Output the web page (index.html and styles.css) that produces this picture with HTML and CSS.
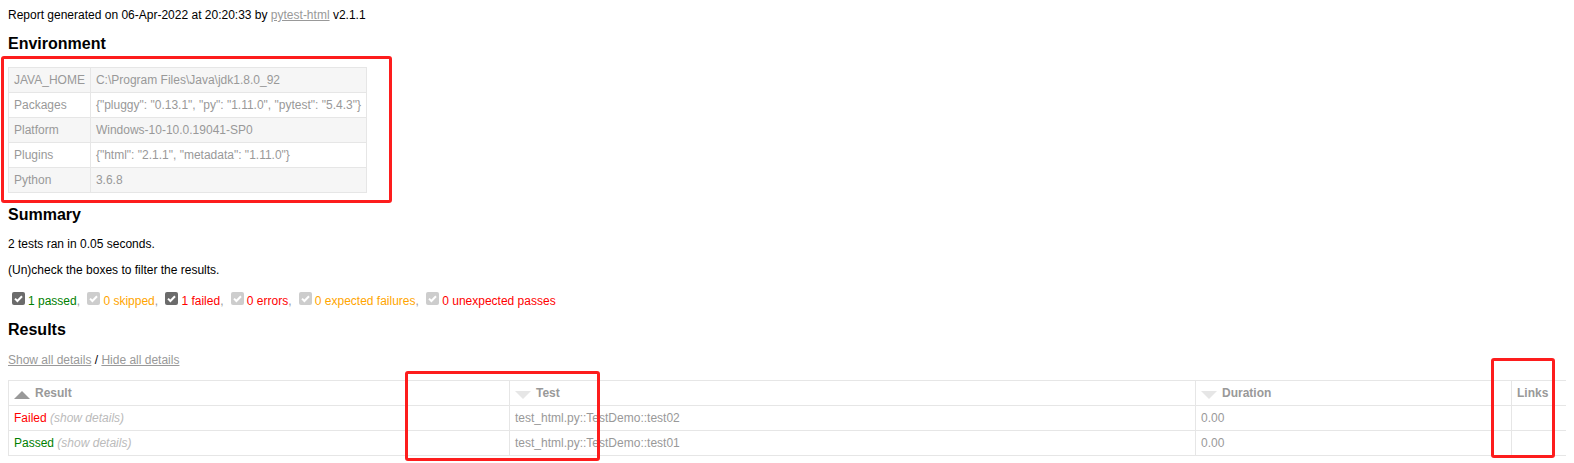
FILE: index.html
```html
<!DOCTYPE html>
<html>
<head>
<meta charset="utf-8">
<title>report.html</title>
<link rel="stylesheet" href="styles.css">
</head>
<body>
<p class="generated">Report generated on 06-Apr-2022 at 20:20:33 by <a class="link" href="#">pytest-html</a> v2.1.1</p>
<h2 class="heading">Environment</h2>
<table class="env-table">
  <tr><td>JAVA_HOME</td><td>C:\Program Files\Java\jdk1.8.0_92</td></tr>
  <tr><td>Packages</td><td>{"pluggy": "0.13.1", "py": "1.11.0", "pytest": "5.4.3"}</td></tr>
  <tr><td>Platform</td><td>Windows-10-10.0.19041-SP0</td></tr>
  <tr><td>Plugins</td><td>{"html": "2.1.1", "metadata": "1.11.0"}</td></tr>
  <tr><td>Python</td><td>3.6.8</td></tr>
</table>
<h2 class="heading">Summary</h2>
<p class="para">2 tests ran in 0.05 seconds. </p>
<p class="para">(Un)check the boxes to filter the results.</p>
<div class="filters"><svg class="checkbox" width="13" height="13" viewBox="0 0 13 13"><rect width="13" height="13" rx="2" fill="#6b6b6b"/><path d="M3 6.6 L5.4 9 L10 4.2" fill="none" stroke="#fff" stroke-width="2"/></svg><span class="passed">1 passed</span>, <svg class="checkbox" width="13" height="13" viewBox="0 0 13 13"><rect width="13" height="13" rx="2" fill="#cdcdcd"/><path d="M3 6.6 L5.4 9 L10 4.2" fill="none" stroke="#fff" stroke-width="2"/></svg><span class="skipped">0 skipped</span>, <svg class="checkbox" width="13" height="13" viewBox="0 0 13 13"><rect width="13" height="13" rx="2" fill="#6b6b6b"/><path d="M3 6.6 L5.4 9 L10 4.2" fill="none" stroke="#fff" stroke-width="2"/></svg><span class="failed">1 failed</span>, <svg class="checkbox" width="13" height="13" viewBox="0 0 13 13"><rect width="13" height="13" rx="2" fill="#cdcdcd"/><path d="M3 6.6 L5.4 9 L10 4.2" fill="none" stroke="#fff" stroke-width="2"/></svg><span class="error">0 errors</span>, <svg class="checkbox" width="13" height="13" viewBox="0 0 13 13"><rect width="13" height="13" rx="2" fill="#cdcdcd"/><path d="M3 6.6 L5.4 9 L10 4.2" fill="none" stroke="#fff" stroke-width="2"/></svg><span class="xfailed">0 expected failures</span>, <svg class="checkbox" width="13" height="13" viewBox="0 0 13 13"><rect width="13" height="13" rx="2" fill="#cdcdcd"/><path d="M3 6.6 L5.4 9 L10 4.2" fill="none" stroke="#fff" stroke-width="2"/></svg><span class="xpassed">0 unexpected passes</span></div>
<h2 class="heading">Results</h2>
<p class="para details"><a class="link" href="#">Show all details</a>&nbsp;/&nbsp;<a class="link" href="#">Hide all details</a></p>
<table class="results-table">
  <colgroup>
    <col class="c-result">
    <col class="c-name">
    <col class="c-duration">
    <col class="c-links">
  </colgroup>
  <thead>
    <tr>
      <th><span class="sort-icon asc"></span>Result</th>
      <th><span class="sort-icon inactive"></span>Test</th>
      <th><span class="sort-icon inactive"></span>Duration</th>
      <th>Links</th>
    </tr>
  </thead>
  <tbody>
    <tr>
      <td><span class="failed">Failed</span><span class="expander"> (show details)</span></td>
      <td>test_html.py::TestDemo::test02</td>
      <td>0.00</td>
      <td></td>
    </tr>
    <tr>
      <td><span class="passed">Passed</span><span class="expander"> (show details)</span></td>
      <td>test_html.py::TestDemo::test01</td>
      <td>0.00</td>
      <td></td>
    </tr>
  </tbody>
</table>
<div class="mark mark-env"></div>
<div class="mark mark-test"></div>
<div class="mark mark-links"></div>
</body>
</html>
```

FILE: styles.css
```css
html {
  overflow: hidden;
}

body {
  font-family: "Liberation Sans", Arial, Helvetica, sans-serif;
  font-size: 12px;
  min-width: 800px;
  color: #999;
  margin: 8px 8px 8px;
  background: #fff;
}

.heading {
  font-size: 16px;
  color: #000;
  margin: 13.28px 0;
}

.generated {
  color: #000;
  margin: 0 0 12px;
}

.para {
  color: #000;
  margin: 12px 0;
}

.details {
  margin-bottom: 13px;
}

.link {
  color: #999;
}

.env-table {
  border-collapse: collapse;
}

.env-table td {
  padding: 5px;
  border: 1px solid #e6e6e6;
}

.env-table tr:nth-child(odd) {
  background-color: #f6f6f6;
}

.filters {
  line-height: normal;
}

.checkbox {
  margin: 3px 3px 3px 4px;
  vertical-align: -3px;
}

.passed {
  color: green;
}

.skipped,
.xfailed {
  color: orange;
}

.failed,
.error,
.xpassed {
  color: red;
}

.results-table {
  border-collapse: collapse;
  border: 1px solid #e6e6e6;
  color: #999;
  font-size: 12px;
  table-layout: fixed;
  width: 1623px;
}

.c-result { width: 501px; }
.c-name { width: 686px; }
.c-duration { width: 316px; }
.c-links { width: 120px; }

.results-table th,
.results-table td {
  padding: 5px;
  border: 1px solid #e6e6e6;
  text-align: left;
}

.results-table th {
  font-weight: bold;
}

.expander {
  color: #bbb;
  font-style: italic;
}

.sort-icon {
  font-size: 0;
  float: left;
  margin-right: 5px;
  margin-top: 5px;
  width: 0;
  height: 0;
  border-left: 8px solid transparent;
  border-right: 8px solid transparent;
}

.sort-icon.asc {
  border-bottom: 8px solid #999;
}

.sort-icon.inactive {
  border-top: 8px solid #e6e6e6;
}

.mark {
  position: absolute;
  border: 3px solid #fd1d1d;
  border-radius: 3px;
  box-sizing: border-box;
}

.mark-env {
  left: 1px;
  top: 56px;
  width: 391px;
  height: 147px;
}

.mark-test {
  left: 405px;
  top: 371px;
  width: 195px;
  height: 90px;
}

.mark-links {
  left: 1491px;
  top: 358px;
  width: 64px;
  height: 100px;
}
```
